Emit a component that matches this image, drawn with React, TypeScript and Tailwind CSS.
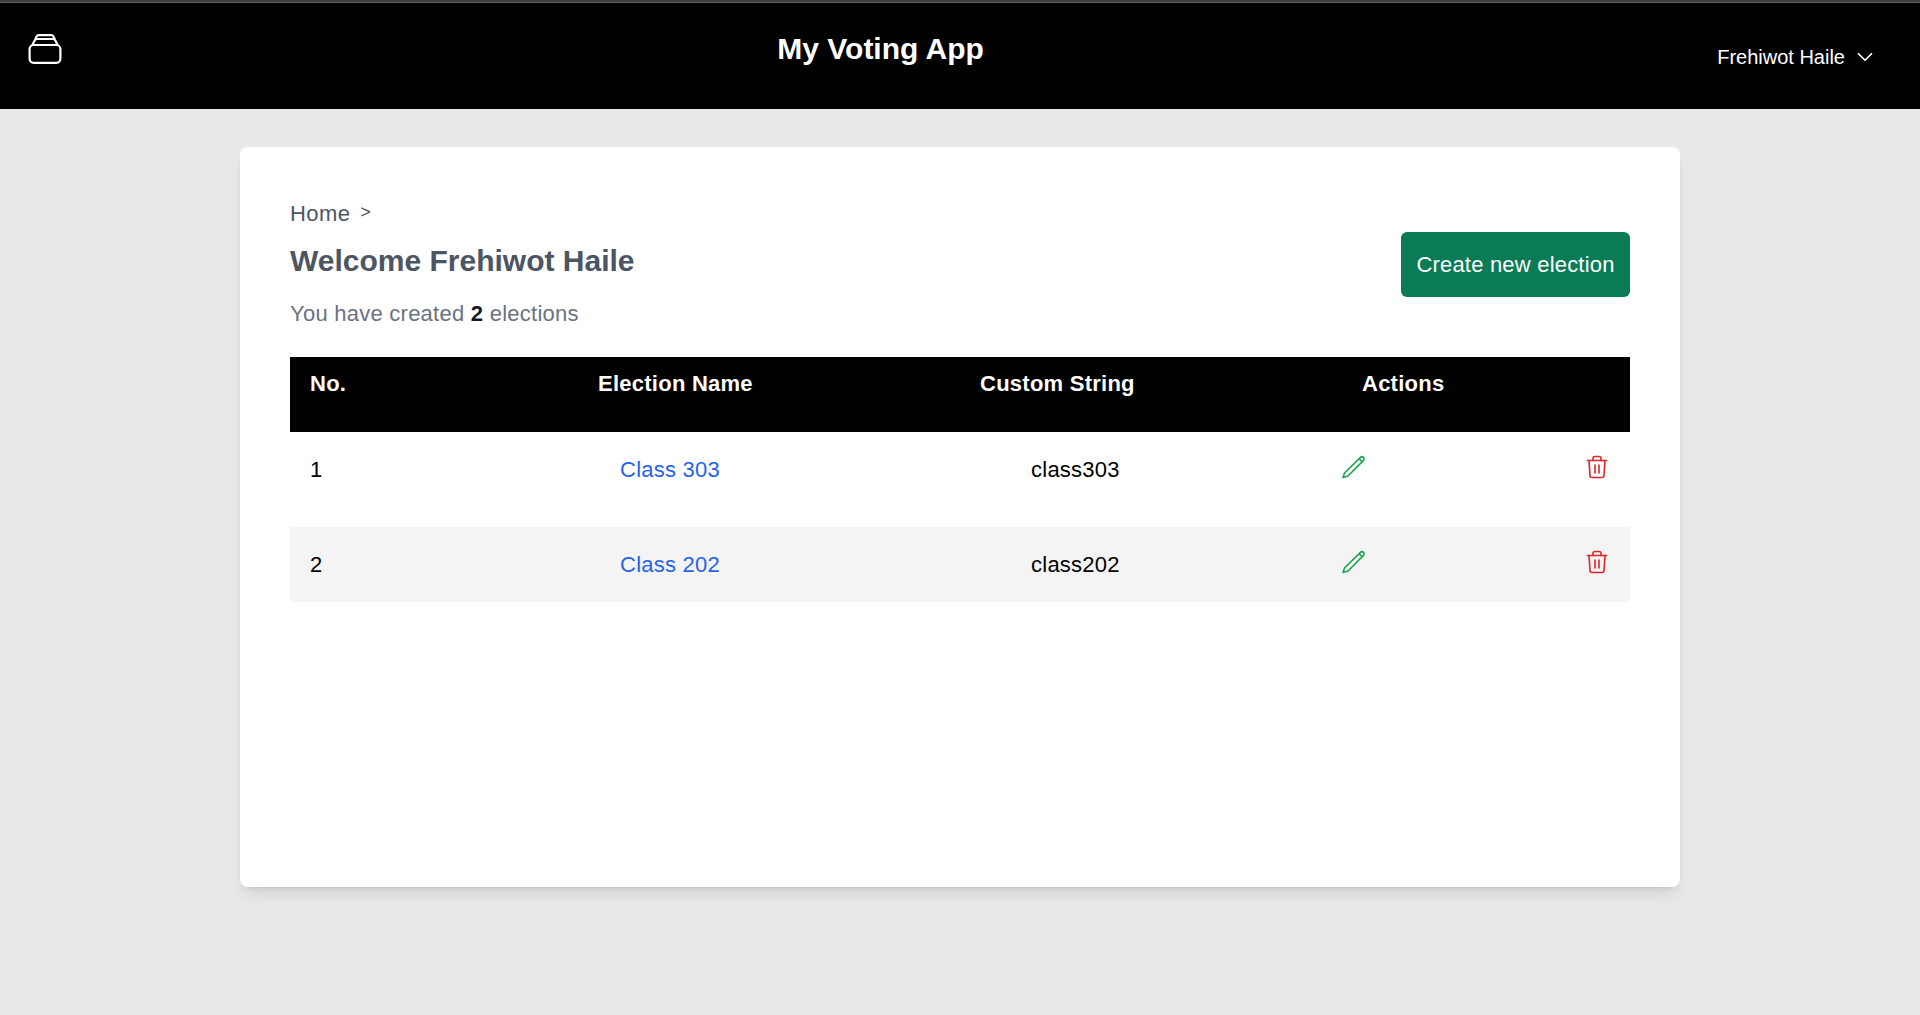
import { ChevronDown } from 'lucide-react';

const elections = [
  { id: 1, name: 'Class 303', custom: 'class303' },
  { id: 2, name: 'Class 202', custom: 'class202' },
];

function DrawerIcon() {
  return (
    <svg viewBox="0 0 34 30" fill="none" stroke="currentColor" strokeWidth="2.2" className="w-[34px] h-[30px]">
      <rect x="1.6" y="11" width="30.8" height="17.8" rx="4" />
      <path d="M4.4 11 L6.6 6.5 C7 5.5 8 5 9 5 H25 C26 5 27 5.5 27.4 6.5 L29.6 11" />
      <path d="M7.2 5 L8.6 2.4 C9 1.6 9.8 1.2 10.8 1.2 H23.2 C24.2 1.2 25 1.6 25.4 2.4 L26.8 5" />
    </svg>
  );
}

function PencilIcon() {
  return (
    <svg viewBox="0 0 24 24" fill="none" stroke="currentColor" strokeWidth="1.5" strokeLinejoin="round" className="w-[24px] h-[24px] text-[#16a34a]">
      <path d="M2 22.5 L3.5 18 L19.5 2.4 a2.1 2.1 0 0 1 3 3 L7 21 Z" />
      <path d="M18.2 3.8 L21 6.8" />
    </svg>
  );
}

function TrashIcon() {
  return (
    <svg viewBox="0 0 24 24" fill="none" stroke="currentColor" strokeWidth="1.6" strokeLinecap="round" className="w-[24px] h-[24px] text-[#dc2626]">
      <path d="M2.5 5.5 H21.5" />
      <path d="M8 5.5 V3.5 a2 2 0 0 1 2-2 h4 a2 2 0 0 1 2 2 V5.5" />
      <path d="M4 5.5 l1 15 a2 2 0 0 0 2 2 h10 a2 2 0 0 0 2-2 l1-15" />
      <path d="M10 10 v8 M14 10 v8" />
    </svg>
  );
}

export default function App() {
  return (
    <div className="min-h-[1015px] bg-[#e9e9eb] font-['Liberation_Sans',Arial,sans-serif]">
      {/* Top bar */}
      <div className="h-[3px] bg-[#3f3f42] border-b border-[#5f5f62]" />
      <header className="h-[106px] bg-black text-white flex items-start justify-between pl-[28px] pr-[42px]">
        <div className="pt-[31px]">
          <DrawerIcon />
        </div>
        <h1 className="pt-[26px] text-[30px] leading-[40px] font-bold ml-[-18px]">My Voting App</h1>
        <div className="pt-[40px] flex items-center gap-[7px] text-[20px] leading-[28px]">
          Frehiwot Haile
          <ChevronDown className="w-[26px] h-[26px]" strokeWidth={1.6} />
        </div>
      </header>

      {/* Card */}
      <main className="flex justify-center pt-[38px]">
        <div className="w-[1440px] h-[740px] bg-white rounded-lg shadow-lg px-[50px] pt-[53px]">
          <div className="flex items-end justify-between">
            <div>
              <div className="flex items-start gap-[10px] text-[22px] leading-[28px] text-[#4b5563] tracking-[0.4px]">
                <span>Home</span>
                <span className="text-[18px] leading-[24px]">&gt;</span>
              </div>
              <h2 className="mt-[13px] text-[30px] leading-[40px] font-bold text-[#4b5563]">Welcome Frehiwot Haile</h2>
              <p className="mt-[19px] text-[22px] leading-[28px] text-[#6b7280] tracking-[0.25px]">
                You have created <span className="font-bold text-[#111827]">2</span> elections
              </p>
            </div>
            <button className="mb-[31px] w-[229px] h-[65px] rounded-md bg-[#097b55] text-white text-[22px] tracking-[0.2px] pb-[1px]">
              Create new election
            </button>
          </div>

          <div className="mt-[29px] text-[22px] tracking-[0.25px]">
            <div className="h-[75px] bg-black text-white font-bold flex items-start pt-[13px] leading-[28px]">
              <span className="pl-[20px] w-[308px]">No.</span>
              <span className="w-[382px]">Election Name</span>
              <span className="w-[382px]">Custom String</span>
              <span>Actions</span>
            </div>
            {elections.map((e, i) => (
              <div
                key={e.id}
                className={`flex items-start ${i === 0 ? 'h-[95px] pt-[24px]' : 'h-[75px] pt-[24px] bg-[#f4f4f4]'} leading-[28px] text-black`}
              >
                <span className="pl-[20px] w-[330px]">{e.id}</span>
                <span className="w-[411px] text-[#2563eb]">{e.name}</span>
                <span className="w-[310px]">{e.custom}</span>
                <span className="w-[245px] -mt-[1px]">
                  <PencilIcon />
                </span>
                <span className="-mt-[1px] -ml-[1px]">
                  <TrashIcon />
                </span>
              </div>
            ))}
          </div>
        </div>
      </main>
    </div>
  );
}
